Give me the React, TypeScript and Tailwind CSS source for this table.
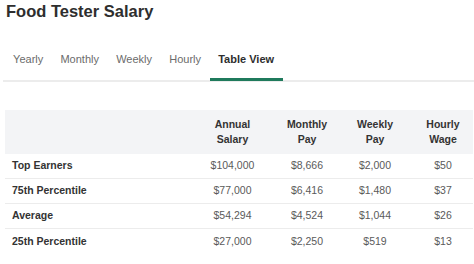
import React from "react";

const tabs = ["Yearly", "Monthly", "Weekly", "Hourly", "Table View"];

const rows = [
  ["Top Earners", "$104,000", "$8,666", "$2,000", "$50"],
  ["75th Percentile", "$77,000", "$6,416", "$1,480", "$37"],
  ["Average", "$54,294", "$4,524", "$1,044", "$26"],
  ["25th Percentile", "$27,000", "$2,250", "$519", "$13"],
];

const cols = "grid grid-cols-[183px_89px_60px_76px_60px]";

export default function App() {
  return (
    <div
      className="w-[474px] h-[264px] bg-white overflow-hidden"
      style={{ fontFamily: '"Liberation Sans", Arial, sans-serif' }}
    >
      <h1 className="pl-[6px] pt-[1px] text-[16.5px] leading-[20px] font-bold text-[#2e2e2e]">
        Food Tester Salary
      </h1>
      <div className="mt-[29px] ml-[3px] flex border-b-2 border-[#ececec] h-[32px]">
        <div className="flex pl-[1.5px]">
          {tabs.map((t, i) => {
            const active = i === tabs.length - 1;
            return (
              <div
                key={t}
                className={
                  "px-[8.6px] text-[11px] leading-[16px] pt-[1px] h-[31px] " +
                  (active
                    ? "font-bold text-[#2e2e2e] border-b-[3px] border-[#1f7a5c]"
                    : "text-[#6b6b6b]")
                }
              >
                {t}
              </div>
            );
          })}
        </div>
      </div>
      <div className="mt-[28px] ml-[5px] w-[468px] text-[10.5px]">
        <div className={cols + " bg-[#f3f4f6] h-[44px] items-center font-bold text-[#333] leading-[15px]"}>
          <div></div>
          <div className="text-center">Annual<br />Salary</div>
          <div className="text-center">Monthly<br />Pay</div>
          <div className="text-center">Weekly<br />Pay</div>
          <div className="text-center">Hourly<br />Wage</div>
        </div>
        {rows.map((r, i) => (
          <div
            key={r[0]}
            className={
              cols +
              " h-[25px] items-center " +
              (i < rows.length - 1 ? "border-b border-[#ececec]" : "")
            }
          >
            <div className="pl-[7px] font-bold text-[#333]">{r[0]}</div>
            {r.slice(1).map((v, j) => (
              <div key={j} className="text-center text-[#5a5a5a]">
                {v}
              </div>
            ))}
          </div>
        ))}
      </div>
    </div>
  );
}
